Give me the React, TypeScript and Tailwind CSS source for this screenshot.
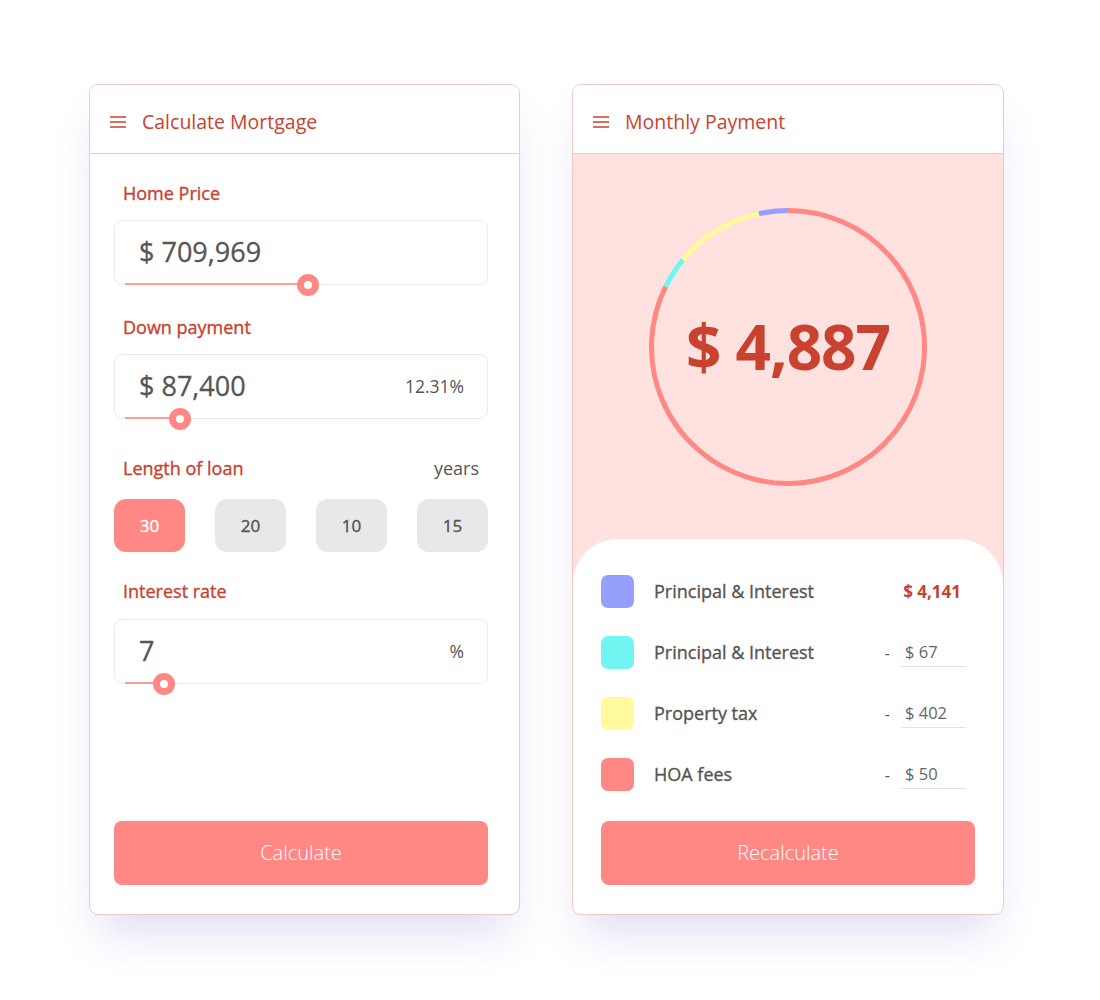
import React from "react";

const font = { fontFamily: '"Open Sans", "Noto Sans", sans-serif' };

const Hamburger = () => (
  <svg width="16" height="12" viewBox="0 0 16 12" fill="none">
    <path d="M0 1h16M0 6h16M0 11h16" stroke="#c9412f" strokeWidth="1.4" />
  </svg>
);

const CardHeader = ({ title }: { title: string }) => (
  <div className="flex h-[69px] shrink-0 items-center gap-[16px] border-b border-[#efc9c4] bg-white pl-[20px] pt-[5px]">
    <Hamburger />
    <span className="text-[19.5px] text-[#c9412f]">{title}</span>
  </div>
);

const SliderInput = ({
  value,
  suffix,
  thumb,
}: {
  value: string;
  suffix?: string;
  thumb: number;
}) => (
  <div className="relative flex h-[65px] items-center justify-between rounded-[8px] border border-[#ececec] pl-[24px] pr-[23px]">
    <span className="text-[27px] text-[#555] [-webkit-text-stroke:0.3px]">{value}</span>
    {suffix && <span className="text-[17.5px] text-[#555]">{suffix}</span>}
    {/* slider over the bottom edge */}
    <div className="absolute bottom-[-1px] left-[10px] h-[2px] bg-[#ff9a97]" style={{ width: thumb - 10 }} />
    <div
      className="absolute bottom-[-12px] flex h-[22px] w-[22px] items-center justify-center rounded-full bg-[#ff8784]"
      style={{ left: thumb - 11 }}
    >
      <div className="h-[8px] w-[8px] rounded-full bg-white" />
    </div>
  </div>
);

const Label = ({ children }: { children: React.ReactNode }) => (
  <div className="pl-[9px] text-[18px] leading-[24px] text-[#c9412f] [-webkit-text-stroke:0.35px]">{children}</div>
);

const arc = (from: number, to: number, r: number, c: number) => {
  // angles in degrees, counterclockwise from top
  const p = (a: number) => {
    const rad = (a * Math.PI) / 180;
    return [c - r * Math.sin(rad), c - r * Math.cos(rad)];
  };
  const [x1, y1] = p(from);
  const [x2, y2] = p(to);
  const large = to - from > 180 ? 1 : 0;
  return `M${x1} ${y1} A${r} ${r} 0 ${large} 0 ${x2} ${y2}`;
};

const Ring = () => {
  const r = 136.5;
  const c = 145;
  return (
    <svg width="290" height="290" viewBox="0 0 290 290" className="absolute">
      <path d={arc(63.7, 360, r, c)} stroke="#ff8784" strokeWidth="5" fill="none" />
      <path d={arc(50.3, 63.7, r, c)} stroke="#70f5f2" strokeWidth="5" fill="none" />
      <path d={arc(12.3, 50.3, r, c)} stroke="#fffa9b" strokeWidth="5" fill="none" />
      <path d={arc(0, 12.3, r, c)} stroke="#959ffd" strokeWidth="5" fill="none" />
    </svg>
  );
};

const rows = [
  { color: "bg-[#959ffd]", label: "Principal & Interest", value: "$ 4,141", main: true },
  { color: "bg-[#70f5f2]", label: "Principal & Interest", value: "$ 67" },
  { color: "bg-[#fffa9b]", label: "Property tax", value: "$ 402" },
  { color: "bg-[#ff8784]", label: "HOA fees", value: "$ 50" },
];

export default function App() {
  return (
    <div className="flex min-h-[1000px] w-[1100px] bg-white pl-[89px] pt-[84px]" style={font}>
      <div className="flex gap-[52px]">
        {/* Calculate Mortgage */}
        <div className="flex h-[831px] w-[431px] flex-col overflow-hidden rounded-[9px] border border-[#efc9c4] bg-white shadow-[0_28px_40px_-12px_rgba(120,120,210,0.25)]">
          <CardHeader title="Calculate Mortgage" />
          <div className="flex flex-1 flex-col pb-[29px] pl-[24px] pr-[31px]">
            <div className="mt-[27px]">
              <Label>Home Price</Label>
            </div>
            <div className="mt-[15px]">
              <SliderInput value="$ 709,969" thumb={193} />
            </div>
            <div className="mt-[30px]">
              <Label>Down payment</Label>
            </div>
            <div className="mt-[15px]">
              <SliderInput value="$ 87,400" suffix="12.31%" thumb={65} />
            </div>
            <div className="mt-[37px] flex items-center justify-between pr-[9px]">
              <Label>Length of loan</Label>
              <span className="text-[18px] leading-[24px] text-[#555]">years</span>
            </div>
            <div className="mt-[19px] flex justify-between">
              {["30", "20", "10", "15"].map((y, i) => (
                <div
                  key={y}
                  className={
                    i === 0
                      ? "flex h-[53px] w-[71px] items-center justify-center rounded-[12px] bg-[#ff8784] text-[17px] text-white [-webkit-text-stroke:0.4px]"
                      : "flex h-[53px] w-[71px] items-center justify-center rounded-[12px] bg-[#e8e8e8] text-[17px] text-[#555] [-webkit-text-stroke:0.4px]"
                  }
                >
                  {y}
                </div>
              ))}
            </div>
            <div className="mt-[27px]">
              <Label>Interest rate</Label>
            </div>
            <div className="mt-[16px]">
              <SliderInput value="7" suffix="%" thumb={49} />
            </div>
            <button className="mt-auto flex h-[64px] w-full items-center justify-center rounded-[8px] bg-[#ff8784] text-[20px] font-light text-white">
              Calculate
            </button>
          </div>
        </div>

        {/* Monthly Payment */}
        <div className="flex h-[831px] w-[432px] flex-col overflow-hidden rounded-[9px] border border-[#efc9c4] bg-[#ffe2e0] shadow-[0_28px_40px_-12px_rgba(120,120,210,0.25)]">
          <CardHeader title="Monthly Payment" />
          <div className="relative flex h-[385px] shrink-0 items-center justify-center">
            <Ring />
            <span className="relative text-[62px] font-bold tracking-[-1px] text-[#c9412f]">$ 4,887</span>
          </div>
          <div className="flex flex-1 flex-col rounded-t-[45px] bg-white pb-[29px] pl-[28px] pr-[28px] pt-[36px]">
            <div className="flex flex-col gap-[28px]">
              {rows.map((r, i) => (
                <div key={i} className="flex h-[33px] items-center">
                  <div className={`h-[33px] w-[33px] rounded-[7px] ${r.color}`} />
                  <span className="ml-[20px] text-[18px] text-[#555] [-webkit-text-stroke:0.35px]">{r.label}</span>
                  <div className="ml-auto flex items-center pr-[9px]">
                    {r.main ? (
                      <span className="pr-[5px] text-[17px] font-bold text-[#c9412f]">{r.value}</span>
                    ) : (
                      <>
                        <span className="text-[16px] text-[#555]">-</span>
                        <div className="ml-[11px] flex h-[28px] w-[65px] items-center border-b border-[#e3e3e3] pl-[4px] text-[16.5px] text-[#666]">
                          {r.value}
                        </div>
                      </>
                    )}
                  </div>
                </div>
              ))}
            </div>
            <button className="mt-auto flex h-[64px] w-full items-center justify-center rounded-[8px] bg-[#ff8784] text-[20px] font-light text-white">
              Recalculate
            </button>
          </div>
        </div>
      </div>
    </div>
  );
}
